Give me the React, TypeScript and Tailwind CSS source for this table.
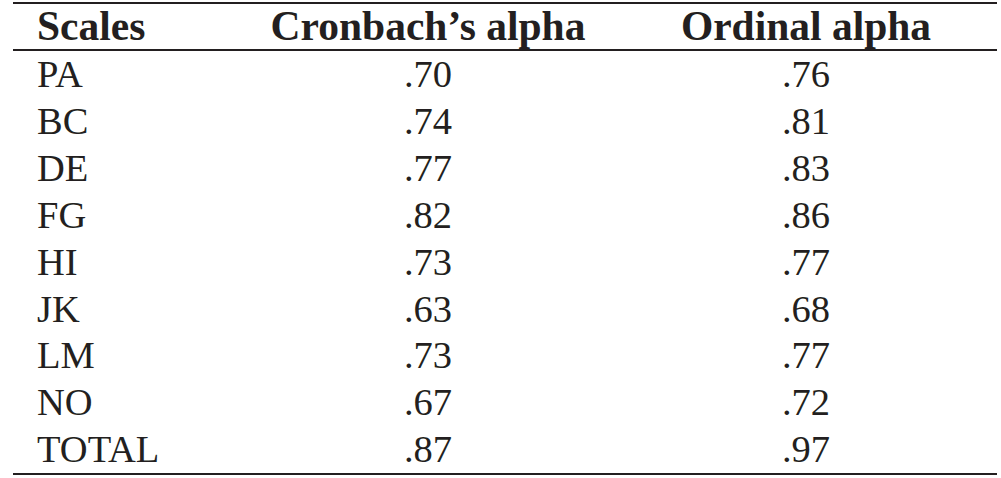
const rows: [string, string, string][] = [
  ["PA", ".70", ".76"],
  ["BC", ".74", ".81"],
  ["DE", ".77", ".83"],
  ["FG", ".82", ".86"],
  ["HI", ".73", ".77"],
  ["JK", ".63", ".68"],
  ["LM", ".73", ".77"],
  ["NO", ".67", ".72"],
  ["TOTAL", ".87", ".97"],
];

export default function App() {
  return (
    <div className="w-[1001px] h-[478px] bg-white pt-[2px] pl-[13px] text-[#231f20] font-['Liberation_Serif',serif]">
      <div className="w-[984px] border-t-2 border-b-2 border-[#231f20]">
        <div className="grid grid-cols-[228px_374px_382px] border-b-2 border-[#231f20] text-[41.5px] leading-[45px] font-bold">
          <div className="pl-[24px]">Scales</div>
          <div className="text-center">Cronbach’s alpha</div>
          <div className="text-center">Ordinal alpha</div>
        </div>
        {rows.map(([scale, cronbach, ordinal]) => (
          <div
            key={scale}
            className="grid grid-cols-[228px_374px_382px] text-[38.5px] leading-[46.9px]"
          >
            <div className="pl-[24px]">{scale}</div>
            <div className="text-center">{cronbach}</div>
            <div className="text-center">{ordinal}</div>
          </div>
        ))}
      </div>
    </div>
  );
}
